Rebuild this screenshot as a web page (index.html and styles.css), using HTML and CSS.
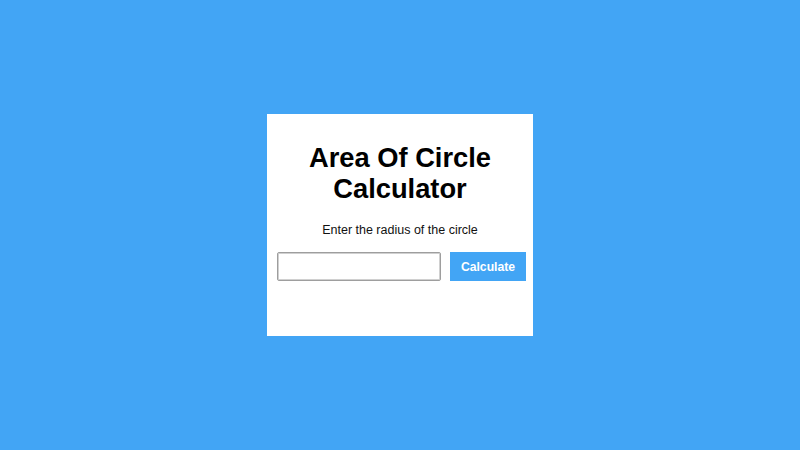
FILE: index.html
```html
<!DOCTYPE html>
<html>
<head>
<meta charset="utf-8">
<link rel="stylesheet" href="styles.css">
</head>
<body>
<div class="card">
  <h1 class="title">Area Of Circle Calculator</h1>
  <p class="label">Enter the radius of the circle</p>
  <div class="row">
    <input class="radius" type="text">
    <button class="calc">Calculate</button>
  </div>
</div>
</body>
</html>
```
FILE: styles.css
```css
html, body {
  margin: 0;
  padding: 0;
}
body {
  width: 800px;
  height: 450px;
  background: #42a5f5;
  display: flex;
  align-items: center;
  justify-content: center;
  font-family: "Liberation Sans", Arial, sans-serif;
}
.card {
  width: 266px;
  height: 222px;
  box-sizing: border-box;
  background: #fff;
  padding: 28px 10px 0 10px;
  display: flex;
  flex-direction: column;
  align-items: center;
}
.title {
  margin: 0;
  font-size: 27.3px;
  line-height: 31px;
  font-weight: bold;
  color: #000;
  text-align: center;
  width: 220px;
}
.label {
  margin: 18px 0 0 0;
  font-size: 12.5px;
  line-height: 16px;
  color: #111;
}
.row {
  margin-top: 14px;
  display: flex;
  align-self: flex-start;
  gap: 9px;
  width: 249px;
}
.radius {
  width: 164px;
  height: 29px;
  box-sizing: border-box;
  border: 1px solid #9e9e9e;
  border-radius: 2px;
  box-shadow: inset 0 0 0 1px #d0d0d0;
  margin: 0;
  padding: 0 6px;
  outline: none;
}
.calc {
  width: 76px;
  height: 29px;
  flex: none;
  border: none;
  margin: 0;
  padding: 0;
  background: #42a5f5;
  color: #fff;
  font-family: "Liberation Sans", Arial, sans-serif;
  font-weight: bold;
  font-size: 12.2px;
}
```
